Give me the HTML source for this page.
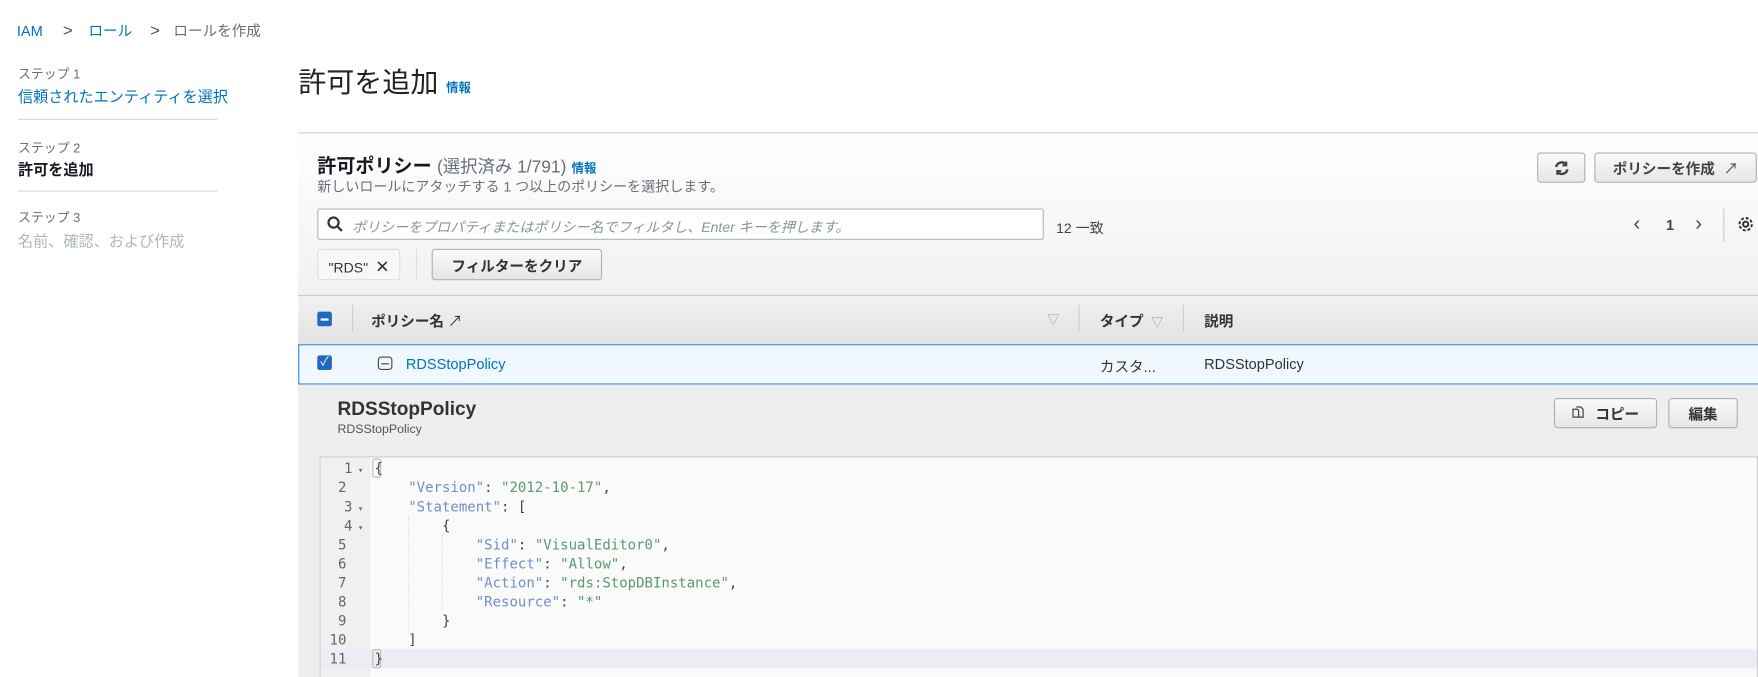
<!DOCTYPE html>
<html><head><meta charset="utf-8"><style>
*{box-sizing:border-box;margin:0;padding:0}
html,body{width:1758px;height:677px;overflow:hidden;background:#fff}
#w{position:absolute;left:0;top:0;width:1568px;height:604px;transform:scale(1.12117);transform-origin:0 0;font-family:"Liberation Sans","Noto Sans CJK JP",sans-serif;color:#16191f;font-size:13px}
.a{position:absolute;white-space:nowrap}
.blue{color:#0073bb}
.g{color:#687078}
.btn{position:absolute;border:1px solid #aab0b6;border-radius:3px;background:linear-gradient(#fafafa,#e6e6e6);font-weight:bold;font-size:13px;color:#444;display:flex;align-items:center;justify-content:center;gap:8px}
.code{font-family:"DejaVu Sans Mono","Liberation Mono",monospace;font-size:12.5px}
.ln{position:absolute;left:0;width:38px;text-align:right;color:#666}
.cl{position:absolute;left:48px;white-space:pre;color:#444}
.k{color:#6f8fc9}.s{color:#5a9a6e}
</style></head><body><div id="w">
<div class="a" style="left:15px;top:17px;font-size:13px"><span class="blue">IAM</span><span style="margin:0 10px 0 18px;color:#555;font-size:15px">&gt;</span><span class="blue" style="margin-left:4px">ロール</span><span style="margin:0 12px 0 16px;color:#555;font-size:15px">&gt;</span><span class="g">ロールを作成</span></div>

<div class="a g" style="left:16px;top:58px;font-size:11.5px">ステップ 1</div>
<div class="a blue" style="left:16px;top:75px;font-size:13.5px">信頼されたエンティティを選択</div>
<div class="a" style="left:16px;top:106px;width:178px;height:1px;background:#d5dbdb"></div>
<div class="a g" style="left:16px;top:124px;font-size:11.5px">ステップ 2</div>
<div class="a" style="left:16px;top:140px;font-size:13.5px;font-weight:bold">許可を追加</div>
<div class="a" style="left:16px;top:170px;width:178px;height:1px;background:#d5dbdb"></div>
<div class="a g" style="left:16px;top:186px;font-size:11.5px">ステップ 3</div>
<div class="a" style="left:16px;top:204px;font-size:13.5px;color:#aab7b8">名前、確認、および作成</div>

<div class="a" style="left:266px;top:54px;font-size:25px;color:#222">許可を追加 <span class="blue" style="font-size:11px;font-weight:bold">情報</span></div>

<div class="a" style="left:266px;top:118px;width:1302px;height:145px;border-top:1px solid #ccc;background:linear-gradient(#fff,#f1f1f1)"></div>
<div class="a" style="left:283px;top:134px;font-size:17px;font-weight:bold">許可ポリシー <span style="font-weight:normal;color:#687078;font-size:15.5px">(選択済み 1/791)</span> <span class="blue" style="font-size:11px">情報</span></div>
<div class="a g" style="left:283px;top:156px;font-size:12.5px">新しいロールにアタッチする 1 つ以上のポリシーを選択します。</div>
<div class="btn" style="left:1371px;top:136px;width:43px;height:27px"><svg width="16" height="16" viewBox="0 0 16 16" fill="none" stroke="#444" stroke-width="2.2"><path d="M3 7a5 5 0 0 1 9-2M13 9a5 5 0 0 1-9 2"/><path d="M12 2v3.5H8.5M4 14v-3.5h3.5" stroke-width="1.8"/></svg></div>
<div class="btn" style="left:1422px;top:136px;width:145px;height:27px">ポリシーを作成 <span style="font-weight:normal">↗</span></div>

<div class="a" style="left:283px;top:186px;width:648px;height:28px;border:1px solid #aab7b8;border-radius:2px;background:#fff"></div>
<svg class="a" style="left:291px;top:192px" width="16" height="16" viewBox="0 0 16 16" fill="none" stroke="#333" stroke-width="2"><circle cx="6.5" cy="6.5" r="4.5"/><path d="M10 10l4 4"/></svg>
<div class="a" style="left:314px;top:192px;font-size:12.5px;font-style:italic;color:#879596">ポリシーをプロパティまたはポリシー名でフィルタし、Enter キーを押します。</div>
<div class="a" style="left:942px;top:193px;font-size:12.5px;color:#444">12 一致</div>
<div class="a" style="left:1457px;top:189px;font-size:18px;color:#444">‹</div>
<div class="a" style="left:1486px;top:193px;font-size:13px;font-weight:bold;color:#444">1</div>
<div class="a" style="left:1512px;top:189px;font-size:18px;color:#444">›</div>
<div class="a" style="left:1537px;top:186px;width:1px;height:30px;background:#ccc"></div>
<svg class="a" style="left:1549px;top:192px" width="16" height="16" viewBox="0 0 16 16" fill="none" stroke="#333" stroke-width="1.8"><circle cx="8" cy="8" r="2.3"/><circle cx="8" cy="8" r="5.5" stroke-dasharray="2.6 1.7"/></svg>

<div class="a" style="left:283px;top:222px;width:74px;height:28px;border:1px solid #ddd;border-radius:3px;background:#f7f7f7;font-size:12.5px;color:#333;padding:6px 0 0 9px">"RDS" <span style="font-size:15px;margin-left:3px">✕</span></div>
<div class="a" style="left:371px;top:222px;width:1px;height:28px;background:#ddd"></div>
<div class="btn" style="left:385px;top:222px;width:152px;height:28px;font-size:13px;color:#333">フィルターをクリア</div>

<div class="a" style="left:266px;top:263px;width:1302px;height:44px;border-top:1px solid #ccc;background:linear-gradient(#f1f1f1,#e2e2e2)"></div>
<div class="a" style="left:283px;top:278px;width:13px;height:13px;background:#1f69c0;border-radius:2px"><div style="position:absolute;left:3px;top:5.5px;width:7px;height:2px;background:#fff"></div></div>
<div class="a" style="left:314px;top:272px;width:1px;height:24px;background:#ccc"></div>
<div class="a" style="left:331px;top:276px;font-size:13px;font-weight:bold;color:#333">ポリシー名 <span style="font-weight:normal">↗</span></div>
<div class="a" style="left:934px;top:277px;font-size:11px;color:#999">▽</div>
<div class="a" style="left:962px;top:272px;width:1px;height:24px;background:#ccc"></div>
<div class="a" style="left:981px;top:276px;font-size:13px;font-weight:bold;color:#333">タイプ <span style="font-weight:normal;font-size:11px;color:#999;margin-left:3px">▽</span></div>
<div class="a" style="left:1055px;top:272px;width:1px;height:24px;background:#ccc"></div>
<div class="a" style="left:1074px;top:276px;font-size:13px;font-weight:bold;color:#333">説明</div>

<div class="a" style="left:266px;top:307px;width:1302px;height:36px;background:#f0f8ff;border:1px solid #3b87d4;border-right:none"></div>
<div class="a" style="left:283px;top:317px;width:13px;height:13px;background:#1f69c0;border-radius:2px;color:#fff;font-size:11px;line-height:13px;text-align:center">✓</div>
<div class="a" style="left:337px;top:318px;width:13px;height:12px;border:1px solid #444;border-radius:3px"><div style="position:absolute;left:2px;top:4.5px;width:7px;height:1.3px;background:#444"></div></div>
<div class="a blue" style="left:362px;top:317px;font-size:13px">RDSStopPolicy</div>
<div class="a" style="left:981px;top:317px;font-size:13px;color:#333">カスタ...</div>
<div class="a" style="left:1074px;top:317px;font-size:13px;color:#333">RDSStopPolicy</div>

<div class="a" style="left:266px;top:343px;width:1302px;height:261px;background:#eee"></div>
<div class="a" style="left:301px;top:355px;font-size:17px;font-weight:bold;color:#333">RDSStopPolicy</div>
<div class="a" style="left:301px;top:377px;font-size:11px;color:#555">RDSStopPolicy</div>
<div class="btn" style="left:1386px;top:355px;width:92px;height:27px;color:#333"><svg width="13" height="13" viewBox="0 0 13 13" fill="none" stroke="#444" stroke-width="1.1"><path d="M1 3h4l1 1v6H1z"/><path d="M4 1h4l2 2v7H6"/></svg>コピー</div>
<div class="btn" style="left:1488px;top:355px;width:62px;height:27px;color:#333">編集</div>

<div class="a code" style="left:285px;top:407px;width:1283px;height:197px;border:1px solid #ccc;border-bottom:none;background:#fafafa">
<div style="position:absolute;left:0;top:0;width:44px;height:100%;background:#f0f0f0"></div>
<div style="position:absolute;left:0;top:171px;width:100%;height:17px;background:#ececf4"></div>
<div style="position:absolute;left:46px;top:171px;width:8px;height:17px;border:1px solid #bbb;border-radius:2px"></div>
<div style="position:absolute;left:46px;top:1px;width:8px;height:17px;border:1px solid #bbb;border-radius:2px"></div>
<div style="position:absolute;left:78px;top:52px;width:1px;height:102px;border-left:1px dotted #ddd"></div>
<div style="position:absolute;left:108px;top:69px;width:1px;height:68px;border-left:1px dotted #ddd"></div>
<div class="ln" style="top:2px">1<span style="font-size:8px"> ▾</span></div><div class="cl" style="top:2px">{</div>
<div class="ln" style="top:19px">2&nbsp;&nbsp;</div><div class="cl" style="top:19px">    <span class="k">"Version"</span>: <span class="s">"2012-10-17"</span>,</div>
<div class="ln" style="top:36px">3<span style="font-size:8px"> ▾</span></div><div class="cl" style="top:36px">    <span class="k">"Statement"</span>: [</div>
<div class="ln" style="top:53px">4<span style="font-size:8px"> ▾</span></div><div class="cl" style="top:53px">        {</div>
<div class="ln" style="top:70px">5&nbsp;&nbsp;</div><div class="cl" style="top:70px">            <span class="k">"Sid"</span>: <span class="s">"VisualEditor0"</span>,</div>
<div class="ln" style="top:87px">6&nbsp;&nbsp;</div><div class="cl" style="top:87px">            <span class="k">"Effect"</span>: <span class="s">"Allow"</span>,</div>
<div class="ln" style="top:104px">7&nbsp;&nbsp;</div><div class="cl" style="top:104px">            <span class="k">"Action"</span>: <span class="s">"rds:StopDBInstance"</span>,</div>
<div class="ln" style="top:121px">8&nbsp;&nbsp;</div><div class="cl" style="top:121px">            <span class="k">"Resource"</span>: <span class="s">"*"</span></div>
<div class="ln" style="top:138px">9&nbsp;&nbsp;</div><div class="cl" style="top:138px">        }</div>
<div class="ln" style="top:155px">10&nbsp;&nbsp;</div><div class="cl" style="top:155px">    ]</div>
<div class="ln" style="top:172px">11&nbsp;&nbsp;</div><div class="cl" style="top:172px">}</div>
</div>
</div></body></html>
